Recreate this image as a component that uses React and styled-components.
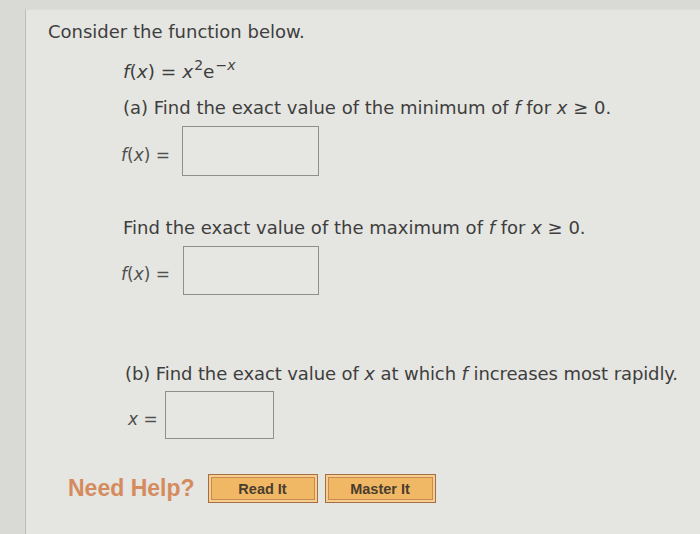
import React from "react";
import styled, { createGlobalStyle } from "styled-components";

const Global = createGlobalStyle`
  html, body { margin: 0; padding: 0; background: #d9d9d5; }
  body { font-family: "DejaVu Sans", Verdana, sans-serif; }
`;

const Page = styled.div`
  width: 700px;
  height: 534px;
  padding: 9px 0 0 25px;
  box-sizing: border-box;
  background: #d9d9d5;
  overflow: hidden;
`;

const Panel = styled.div`
  height: 100%;
  background: #e5e5e1;
  border-left: 1px solid #bdbdb8;
  border-top: 1px solid #dcdcd8;
  padding: 11px 0 0 22px;
  box-sizing: border-box;
  color: #3e3e3e;
`;

const Line = styled.div`
  font-size: 18px;
  line-height: 22px;
  margin-top: ${(p) => p.$mt || 0}px;
  margin-left: ${(p) => p.$ml || 0}px;
  letter-spacing: ${(p) => p.$ls || 0}px;
  white-space: nowrap;
`;

const Formula = styled(Line)`
  font-size: 18.5px;
`;

const V = styled.i`
  font-style: italic;
`;

const Sup = styled.sup`
  font-size: 14px;
  line-height: 0;
  vertical-align: 8px;
  margin-left: 1px;
`;

const AnswerRow = styled.div`
  display: flex;
  align-items: center;
  margin-top: ${(p) => p.$mt}px;
  margin-left: ${(p) => p.$ml}px;
  gap: ${(p) => p.$gap}px;
`;

const Label = styled.span`
  font-size: 17px;
  color: #505050;
  padding-top: 7px;
  white-space: nowrap;
`;

const Box = styled.div`
  width: ${(p) => p.$w}px;
  height: ${(p) => p.$h}px;
  box-sizing: border-box;
  border: 1px solid #8f8f8c;
  background: #e6e6e2;
`;

const HelpRow = styled.div`
  display: flex;
  align-items: center;
  margin-top: 35px;
  margin-left: 20px;
`;

const NeedHelp = styled.span`
  font-family: "Liberation Sans", Arial, sans-serif;
  font-weight: bold;
  font-size: 23px;
  color: #d58b5d;
  margin-right: 13px;
`;

const HelpButton = styled.div`
  width: ${(p) => p.$w}px;
  height: 29px;
  box-sizing: border-box;
  border: 1px solid #a66e48;
  background: #f0b865;
  box-shadow: inset 0 0 0 2px #f6cf8d, inset 0 0 0 3px #c98a55;
  display: flex;
  align-items: center;
  justify-content: center;
  font-family: "Liberation Sans", Arial, sans-serif;
  font-weight: bold;
  font-size: 14.5px;
  color: #4a3d2e;
  margin-right: 7px;
`;

export default function App() {
  return (
    <>
      <Global />
      <Page>
        <Panel>
          <Line>Consider the function below.</Line>
          <Formula $mt={18} $ml={75}>
            <V>f</V>(<V>x</V>) = <V>x</V>
            <Sup>2</Sup>e<Sup>
              −<V>x</V>
            </Sup>
          </Formula>
          <Line $mt={14} $ml={75}>
            (a) Find the exact value of the minimum of <V>f</V> for <V>x</V> ≥ 0.
          </Line>
          <AnswerRow $mt={7} $ml={73} $gap={12}>
            <Label>
              <V>f</V>(<V>x</V>) =
            </Label>
            <Box $w={137} $h={50} />
          </AnswerRow>
          <Line $mt={41} $ml={75}>
            Find the exact value of the maximum of <V>f</V> for <V>x</V> ≥ 0.
          </Line>
          <AnswerRow $mt={7} $ml={73} $gap={13}>
            <Label>
              <V>f</V>(<V>x</V>) =
            </Label>
            <Box $w={136} $h={49} />
          </AnswerRow>
          <Line $mt={68} $ml={77} $ls={-0.1}>
            (b) Find the exact value of <V>x</V> at which <V>f</V> increases most rapidly.
          </Line>
          <AnswerRow $mt={6} $ml={80} $gap={7}>
            <Label>
              <V>x</V> =
            </Label>
            <Box $w={109} $h={48} />
          </AnswerRow>
          <HelpRow>
            <NeedHelp>Need Help?</NeedHelp>
            <HelpButton $w={110}>Read It</HelpButton>
            <HelpButton $w={111}>Master It</HelpButton>
          </HelpRow>
        </Panel>
      </Page>
    </>
  );
}
